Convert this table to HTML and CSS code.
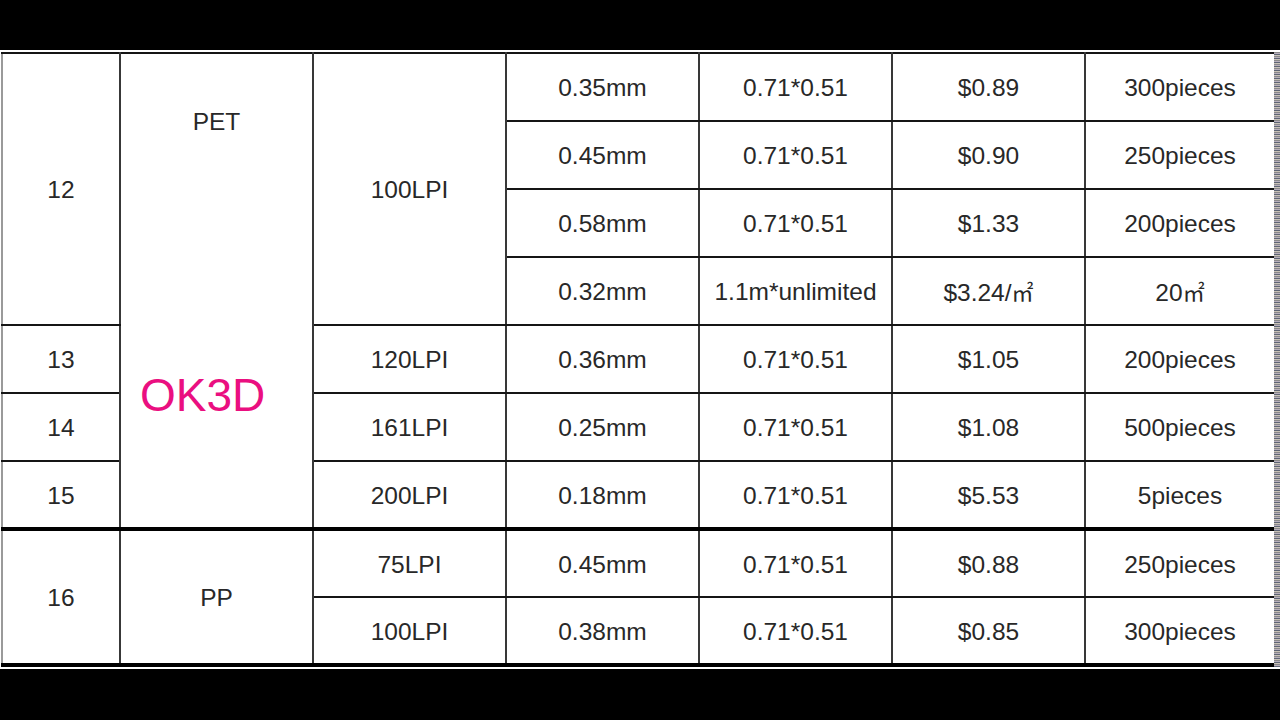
FILE: index.html
```html
<!DOCTYPE html>
<html>
<head>
<meta charset="utf-8">
<link rel="stylesheet" href="styles.css">
</head>
<body>
<div class="screen">
  <div class="bar-top"></div>
  <div class="sheet">
    <table class="grid">
      <colgroup>
        <col class="c1"><col class="c2"><col class="c3"><col class="c4"><col class="c5"><col class="c6"><col class="c7">
      </colgroup>
      <tbody>
        <tr>
          <td rowspan="4">12</td>
          <td rowspan="7" class="material"><div class="mat-name">PET</div><div class="brand"><span class="brand-text">OK3D</span></div></td>
          <td rowspan="4">100LPI</td>
          <td>0.35mm</td><td>0.71*0.51</td><td>$0.89</td><td>300pieces</td>
        </tr>
        <tr><td>0.45mm</td><td>0.71*0.51</td><td>$0.90</td><td>250pieces</td></tr>
        <tr><td>0.58mm</td><td>0.71*0.51</td><td>$1.33</td><td>200pieces</td></tr>
        <tr><td>0.32mm</td><td>1.1m*unlimited</td><td>$3.24/<span class="sq">㎡</span></td><td>20<span class="sq">㎡</span></td></tr>
        <tr><td>13</td><td>120LPI</td><td>0.36mm</td><td>0.71*0.51</td><td>$1.05</td><td>200pieces</td></tr>
        <tr><td>14</td><td>161LPI</td><td>0.25mm</td><td>0.71*0.51</td><td>$1.08</td><td>500pieces</td></tr>
        <tr><td>15</td><td>200LPI</td><td>0.18mm</td><td>0.71*0.51</td><td>$5.53</td><td>5pieces</td></tr>
        <tr class="group-start">
          <td rowspan="2">16</td><td rowspan="2">PP</td>
          <td>75LPI</td><td>0.45mm</td><td>0.71*0.51</td><td>$0.88</td><td>250pieces</td>
        </tr>
        <tr class="last"><td>100LPI</td><td>0.38mm</td><td>0.71*0.51</td><td>$0.85</td><td>300pieces</td></tr>
      </tbody>
    </table>
    <div class="edge"></div>
  </div>
</div>
</body>
</html>
```

FILE: styles.css
```css
html, body {
  margin: 0;
  padding: 0;
  background: #000;
}
body {
  width: 1280px;
  height: 720px;
  overflow: hidden;
}
.screen {
  display: flex;
  flex-direction: column;
}
.bar-top {
  height: 50px;
  background: #000;
}
.sheet {
  display: flex;
  background: #fff;
  padding: 2px 0 2px 1px;
}
.grid {
  border-collapse: collapse;
  table-layout: fixed;
  width: 1272px;
  font-family: "Liberation Sans", Arial, sans-serif;
  font-size: 24.5px;
  color: #282828;
  border-left: 2px solid #9a9a9a;
  border-top: 2px solid #151515;
  border-bottom: 4px solid #000;
}
.c1 { width: 118px; }
.c2 { width: 193px; }
.c3 { width: 193px; }
.c4 { width: 193px; }
.c5 { width: 193px; }
.c6 { width: 193px; }
.c7 { width: 189px; }
.grid tr {
  height: 68px;
}
.grid td {
  padding: 2px 0 0 0;
  text-align: center;
  vertical-align: middle;
  line-height: 28px;
  border-top: 2px solid #151515;
  border-bottom: 2px solid #151515;
  border-left: 2px solid #383838;
  border-right: 2px solid #383838;
  white-space: nowrap;
}
.grid td:first-child {
  border-left: 2px solid #9a9a9a;
}
.grid tr td:last-child {
  border-right: none;
}
.grid tr.group-start td {
  border-top: 4px solid #000;
}
.grid tr.last td {
  border-bottom: 4px solid #000;
}
.grid td.material {
  vertical-align: top;
  padding-top: 54px;
}
.mat-name {
  text-align: center;
}
.brand {
  margin-top: 236px;
  padding-left: 19px;
  text-align: left;
  line-height: 46px;
}
.brand-text {
  display: inline-block;
  font-size: 46px;
  color: #ea0f80;
}
.sq {
  font-family: "Noto Sans CJK SC", sans-serif;
  font-size: 22px;
}
.edge {
  width: 7px;
  flex: none;
  background: repeating-linear-gradient(180deg, #8a8a8a 0 1px, #b7aebb 1px 2px, #5e6676 2px 3px, #c9c2b8 3px 4px);
}
```
